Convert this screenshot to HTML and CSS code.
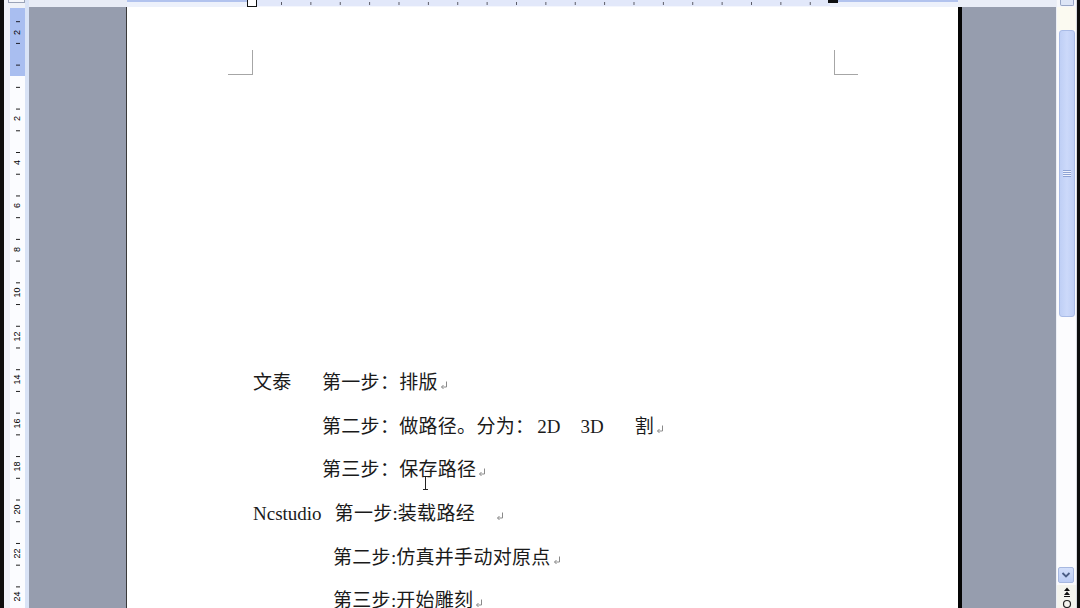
FILE: index.html
```html
<!DOCTYPE html>
<html lang="zh-CN">
<head>
<meta charset="utf-8">
<title>Word</title>
<link rel="stylesheet" href="styles.css">
</head>
<body>
<div class="app">
  <div class="edge-l"></div>
  <div class="vruler">
    <div class="vr-top"><div class="vr-corner"></div></div>
    <div class="vr-margin">
      <div class="vr-num first"><span>2</span></div>
    </div>
    <div class="vr-body">
      <div class="vr-spacer"></div>
      <div class="vr-num"><span>2</span></div>
      <div class="vr-num"><span>4</span></div>
      <div class="vr-num"><span>6</span></div>
      <div class="vr-num"><span>8</span></div>
      <div class="vr-num"><span>10</span></div>
      <div class="vr-num"><span>12</span></div>
      <div class="vr-num"><span>14</span></div>
      <div class="vr-num"><span>16</span></div>
      <div class="vr-num"><span>18</span></div>
      <div class="vr-num"><span>20</span></div>
      <div class="vr-num"><span>22</span></div>
      <div class="vr-num"><span>24</span></div>
    </div>
  </div>
  <div class="main">
    <div class="hruler">
      <div class="hr-side"></div>
      <div class="hr-margin hr-m1"></div>
      <div class="hr-text"></div>
      <div class="hr-margin hr-m2"></div>
      <div class="hr-rest"></div>
      <div class="indent-marker"></div>
      <div class="right-marker"></div>
    </div>
    <div class="desk">
      <div class="page">
        <div class="corners">
          <div class="cm-l"></div>
          <div class="cm-r"></div>
        </div>
        <div class="doc">
          <div class="line"><span class="lead">文泰</span>第一步：排版<svg class="pm" viewBox="0 0 8 9"><path d="M6.5 0.5V6H1.5M3.5 4L1.5 6L3.5 8" /></svg></div>
          <div class="line ind1">第二步：做路径。分为：<span class="lat g1">2D</span><span class="lat g2">3D</span><span class="g3">割</span><svg class="pm" viewBox="0 0 8 9"><path d="M6.5 0.5V6H1.5M3.5 4L1.5 6L3.5 8" /></svg></div>
          <div class="line ind1">第三步：保存路径<svg class="pm" viewBox="0 0 8 9"><path d="M6.5 0.5V6H1.5M3.5 4L1.5 6L3.5 8" /></svg></div>
          <div class="line"><span class="lat">Ncstudio</span><span class="g4">第一步</span><span class="lat">:</span>装载路经<svg class="pm far" viewBox="0 0 8 9"><path d="M6.5 0.5V6H1.5M3.5 4L1.5 6L3.5 8" /></svg></div>
          <div class="line ind2">第二步<span class="lat">:</span>仿真并手动对原点<svg class="pm" viewBox="0 0 8 9"><path d="M6.5 0.5V6H1.5M3.5 4L1.5 6L3.5 8" /></svg></div>
          <div class="line ind2">第三步<span class="lat">:</span>开始雕刻<svg class="pm" viewBox="0 0 8 9"><path d="M6.5 0.5V6H1.5M3.5 4L1.5 6L3.5 8" /></svg></div>
        </div>
        <svg class="ibeam" viewBox="0 0 7 14"><path d="M1 0.5H6M3.5 0.5V13.5M1 13.5H6" /></svg>
      </div>
    </div>
  </div>
  <div class="sb">
    <div class="sb-up"><div class="sb-up-btn"></div></div>
    <div class="sb-gap"></div>
    <div class="sb-thumb"><div class="grip"></div></div>
    <div class="sb-track"></div>
    <div class="sb-down"><svg viewBox="0 0 14 14"><path d="M3.5 5L7 8.5L10.5 5" /></svg></div>
    <div class="sb-prev"><svg viewBox="0 0 12 12"><path class="fill" d="M6 1.5L9 5H3Z M6 5.5L9 9H3Z" /><path d="M3 10.5H9" /></svg></div>
    <div class="sb-browse"><svg viewBox="0 0 12 10"><circle cx="6" cy="6" r="3.5" /></svg></div>
  </div>
  <div class="edge-r"></div>
</div>
</body>
</html>
```

FILE: styles.css
```css
* {
  box-sizing: border-box;
  margin: 0;
  padding: 0;
}

html, body {
  width: 1080px;
  height: 608px;
  overflow: hidden;
}

body {
  background: #000;
  font-family: "Liberation Sans", Arial, sans-serif;
}

.app {
  display: flex;
  width: 1080px;
  height: 608px;
  overflow: hidden;
}

.edge-l {
  width: 4px;
  flex: none;
  background: #0d0d0d;
}

.edge-r {
  width: 3px;
  flex: none;
  background: #0d0d0d;
}

/* vertical ruler */
.vruler {
  width: 25px;
  flex: none;
  display: flex;
  flex-direction: column;
  background: #eef1f8;
  border-right: 4px solid #d9e3f6;
  padding-left: 6px;
  overflow: hidden;
}

.vr-top {
  height: 8px;
  flex: none;
}

.vr-corner {
  margin-left: -2px;
  width: 17px;
  height: 3px;
  border: 1px solid #9aa3b8;
  border-top: none;
  background: #f4f6fb;
}

.vr-margin {
  height: 67.5px;
  flex: none;
  background-color: #a9bef0;
  background-image: linear-gradient(to bottom, #1e1e2a 0, #1e1e2a 1.3px, transparent 1.3px);
  background-size: 4px 21.72px;
  background-repeat: repeat-y;
  background-position: 5.5px 13.2px;
}

.vr-body {
  flex: 1;
  background-color: #fbfcff;
  background-image: linear-gradient(to bottom, #1e1e1e 0, #1e1e1e 1.3px, transparent 1.3px);
  background-size: 4px 21.72px;
  background-repeat: repeat-y;
  background-position: 5.5px 10.86px;
}

.vr-spacer {
  height: 21.72px;
}

.vr-num {
  height: 43.44px;
  display: flex;
  align-items: center;
  justify-content: center;
  font-size: 9px;
  color: #000;
  font-family: "Liberation Sans", Arial, sans-serif;
}

.vr-num.first {
  margin-top: 2.3px;
}

.vr-num span {
  display: block;
  transform: rotate(-90deg);
  line-height: 9px;
}

/* main area */
.main {
  flex: 1;
  display: flex;
  flex-direction: column;
  min-width: 0;
}

.hruler {
  height: 7px;
  flex: none;
  display: flex;
  position: relative;
  background: #e9edf7;
}

.hr-side {
  width: 98px;
  flex: none;
  background: #e8ecf6;
}

.hr-margin {
  flex: none;
  background: linear-gradient(to bottom, #b2c3ee 0, #b2c3ee 2px, #edf1fb 2px);
}

.hr-m1 {
  width: 123px;
}

.hr-m2 {
  width: 128px;
}

.hr-text {
  width: 580px;
  flex: none;
  background-color: #e2e8fa;
  background-image: linear-gradient(to right, #5a5a66 0, #5a5a66 1px, transparent 1px);
  background-size: 29.39px 3px;
  background-repeat: repeat-x;
  background-position: 31px 2px;
  border-bottom: 1px solid #f4f6fd;
}

.hr-rest {
  flex: 1;
  background: #e9edf7;
}

.indent-marker {
  position: absolute;
  left: 218px;
  top: -3px;
  width: 10px;
  height: 10px;
  background: #fff;
  border: 1.5px solid #111;
}

.right-marker {
  position: absolute;
  left: 799px;
  top: 0;
  width: 10px;
  height: 2.5px;
  background: #111;
}

.desk {
  flex: 1;
  background: #969dae;
  padding-left: 97px;
  overflow: hidden;
}

.page {
  position: relative;
  width: 836px;
  height: 700px;
  background: #fff;
  border-left: 1px solid #3a3a3a;
  border-right: 4px solid #050505;
  overflow: hidden;
}

.corners {
  display: flex;
  justify-content: space-between;
  margin: 43px 0 0 101px;
  width: 630px;
}

.cm-l {
  width: 25px;
  height: 25px;
  border-right: 1px solid #a6a6a6;
  border-bottom: 1px solid #a6a6a6;
}

.cm-r {
  width: 24px;
  height: 25px;
  border-left: 1px solid #a6a6a6;
  border-bottom: 1px solid #a6a6a6;
}

.doc {
  margin-top: 284.2px;
  padding-left: 126px;
  font-family: "Noto Sans CJK SC", "Noto Sans CJK JP", sans-serif;
  font-size: 19px;
  line-height: 43.6px;
  letter-spacing: 0.3px;
  color: #1a1a1a;
}

.line {
  height: 43.6px;
  white-space: nowrap;
}

.lead {
  display: inline-block;
  width: 69px;
}

.ind1 {
  padding-left: 69px;
}

.ind2 {
  padding-left: 80px;
}

.lat {
  font-family: "Liberation Serif", "Times New Roman", serif;
  letter-spacing: 0;
}

.g1 {
  margin-left: 3px;
}

.g2 {
  margin-left: 20px;
}

.g3 {
  margin-left: 31px;
}

.g4 {
  margin-left: 13px;
}

.pm {
  display: inline-block;
  width: 8px;
  height: 9px;
  margin-left: 2px;
  vertical-align: -1px;
}

.pm path {
  fill: none;
  stroke: #8a8a8a;
  stroke-width: 1;
}

.pm.far {
  margin-left: 21px;
}

.ibeam {
  position: absolute;
  left: 295px;
  top: 469px;
  width: 7px;
  height: 14px;
}

.ibeam path {
  fill: none;
  stroke: #222;
  stroke-width: 1;
}

/* scrollbar */
.sb {
  width: 21px;
  flex: none;
  display: flex;
  flex-direction: column;
  background: #fbfbfd;
  border-left: 1px solid #eceff6;
  border-right: 1px solid #d6d8de;
}

.sb-up {
  height: 7px;
  flex: none;
  padding: 0 2px 0 3px;
  background: #f6f7fb;
}

.sb-up-btn {
  height: 6px;
  border: 1px solid #98a6c6;
  border-top: none;
  border-radius: 0 0 2px 2px;
  background: #dde5f6;
}

.sb-gap {
  height: 23px;
  flex: none;
  background: #fbfaf1;
}

.sb-thumb {
  height: 287px;
  flex: none;
  margin: 0 1px 0 2px;
  background: linear-gradient(to right, #bfcff5, #ccd9fa 50%, #bfcff5);
  border: 1px solid #a9bbe6;
  border-radius: 3px;
  display: flex;
  align-items: center;
  justify-content: center;
}

.grip {
  width: 8px;
  height: 7px;
  background: repeating-linear-gradient(to bottom, #8ea3d4 0, #8ea3d4 1px, #eef2fd 1px, #eef2fd 2px);
}

.sb-track {
  flex: 1;
  background: #fcfcfe;
}

.sb-down {
  height: 16px;
  flex: none;
  margin: 0 2px 2px 1px;
  background: linear-gradient(to bottom, #d3dffb, #bccdf5);
  border: 1px solid #a7b8e0;
  border-radius: 2px;
  display: flex;
  align-items: center;
  justify-content: center;
}

.sb-down svg {
  width: 14px;
  height: 14px;
}

.sb-down path {
  fill: none;
  stroke: #4a5d86;
  stroke-width: 1.8;
}

.sb-prev {
  height: 13px;
  flex: none;
  display: flex;
  justify-content: center;
  align-items: center;
  background: #f4f4ee;
}

.sb-prev svg {
  width: 12px;
  height: 12px;
}

.sb-prev path {
  fill: none;
  stroke: #111;
  stroke-width: 1;
}

.sb-prev path.fill {
  fill: #111;
  stroke: none;
}

.sb-browse {
  height: 10px;
  flex: none;
  display: flex;
  justify-content: center;
  background: #f4f4ee;
}

.sb-browse svg {
  width: 12px;
  height: 10px;
}

.sb-browse circle {
  fill: none;
  stroke: #222;
  stroke-width: 1.2;
}
```
